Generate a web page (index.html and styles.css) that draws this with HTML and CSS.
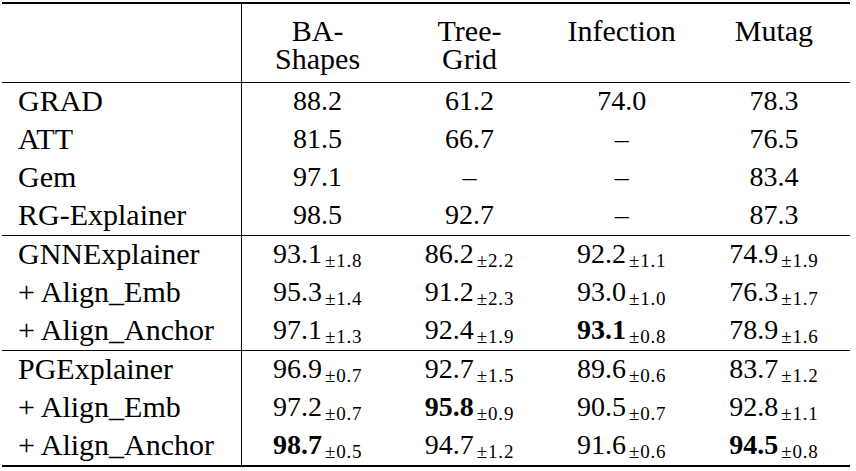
FILE: index.html
```html
<!DOCTYPE html>
<html>
<head>
<meta charset="utf-8">
<link rel="stylesheet" href="styles.css">
</head>
<body>
<table class="results">
  <colgroup>
    <col class="c-name">
    <col class="c-val">
    <col class="c-val">
    <col class="c-val">
    <col class="c-val">
  </colgroup>
  <thead>
    <tr class="head">
      <th class="name"></th>
      <th><div class="hl">BA-</div><div class="hl">Shapes</div></th>
      <th><div class="hl">Tree-</div><div class="hl">Grid</div></th>
      <th><div class="hl">Infection</div></th>
      <th><div class="hl">Mutag</div></th>
    </tr>
  </thead>
  <tbody class="group">
    <tr><td class="name">GRAD</td><td>88.2</td><td>61.2</td><td>74.0</td><td>78.3</td></tr>
    <tr><td class="name">ATT</td><td>81.5</td><td>66.7</td><td>–</td><td>76.5</td></tr>
    <tr><td class="name">Gem</td><td>97.1</td><td>–</td><td>–</td><td>83.4</td></tr>
    <tr><td class="name">RG-Explainer</td><td>98.5</td><td>92.7</td><td>–</td><td>87.3</td></tr>
  </tbody>
  <tbody class="group">
    <tr><td class="name">GNNExplainer</td><td>93.1<span class="sub">±1.8</span></td><td>86.2<span class="sub">±2.2</span></td><td>92.2<span class="sub">±1.1</span></td><td>74.9<span class="sub">±1.9</span></td></tr>
    <tr><td class="name">+ Align_Emb</td><td>95.3<span class="sub">±1.4</span></td><td>91.2<span class="sub">±2.3</span></td><td>93.0<span class="sub">±1.0</span></td><td>76.3<span class="sub">±1.7</span></td></tr>
    <tr><td class="name">+ Align_Anchor</td><td>97.1<span class="sub">±1.3</span></td><td>92.4<span class="sub">±1.9</span></td><td><b>93.1</b><span class="sub">±0.8</span></td><td>78.9<span class="sub">±1.6</span></td></tr>
  </tbody>
  <tbody class="group last">
    <tr><td class="name">PGExplainer</td><td>96.9<span class="sub">±0.7</span></td><td>92.7<span class="sub">±1.5</span></td><td>89.6<span class="sub">±0.6</span></td><td>83.7<span class="sub">±1.2</span></td></tr>
    <tr><td class="name">+ Align_Emb</td><td>97.2<span class="sub">±0.7</span></td><td><b>95.8</b><span class="sub">±0.9</span></td><td>90.5<span class="sub">±0.7</span></td><td>92.8<span class="sub">±1.1</span></td></tr>
    <tr><td class="name">+ Align_Anchor</td><td><b>98.7</b><span class="sub">±0.5</span></td><td>94.7<span class="sub">±1.2</span></td><td>91.6<span class="sub">±0.6</span></td><td><b>94.5</b><span class="sub">±0.8</span></td></tr>
  </tbody>
</table>
</body>
</html>
```
FILE: styles.css
```css
html, body {
  margin: 0;
  padding: 0;
  background: #fff;
}

body {
  padding: 2px 0 0 2px;
  color: #000;
  font-family: "Liberation Serif", "Times New Roman", serif;
}

.results {
  border-collapse: collapse;
  width: 848px;
  table-layout: fixed;
  font-size: 28px;
  border-top: 2px solid #000;
  border-bottom: 2px solid #000;
}

.results th,
.results td {
  padding: 0;
  text-align: center;
  font-weight: normal;
  font-family: "Liberation Serif", "Times New Roman", serif;
}

.c-name { width: 239px; }
.c-val { width: 152px; }

.results .name {
  text-align: left;
  padding-left: 16px;
  font-size: 30px;
  border-right: 1.5px solid #000;
}

.head th {
  vertical-align: top;
  font-size: 30px;
  height: 56px;
  padding-top: 13px;
  padding-bottom: 9px;
}

.hl {
  height: 28px;
  line-height: 28px;
}

.head {
  border-bottom: 1.5px solid #000;
}

.group td {
  height: 36px;
  line-height: 36px;
  padding-bottom: 2px;
  white-space: nowrap;
}

.group {
  border-bottom: 1.5px solid #000;
}

.group.last {
  border-bottom: 2px solid #000;
}

.sub {
  font-size: 19px;
  line-height: 0;
  letter-spacing: 0.8px;
  margin-left: 3px;
  vertical-align: -4px;
}

b {
  font-weight: bold;
}
```
